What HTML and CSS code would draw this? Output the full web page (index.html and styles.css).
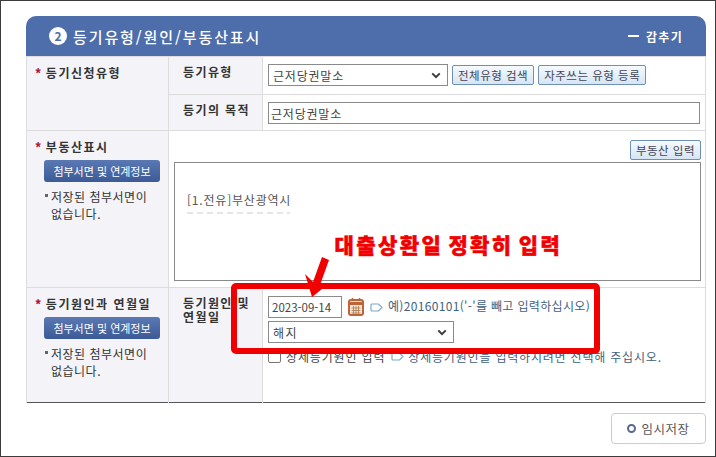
FILE: index.html
```html
<!DOCTYPE html>
<html lang="ko">
<head>
    <meta charset="UTF-8">
    <title>등기유형/원인/부동산표시</title>
    <link rel="stylesheet" href="styles.css">
</head>
<body>
    <div class="page">
        <div class="panel-head">
            <h2 class="panel-title"><span class="step">2</span>등기유형/원인/부동산표시</h2>
            <span class="fold"><i class="fold-bar"></i>감추기</span>
        </div>
        <table class="form">
            <colgroup>
                <col class="col-a">
                <col class="col-b">
                <col>
            </colgroup>
            <tr class="row-type">
                <th class="main" rowspan="2"><b class="star">*</b>등기신청유형</th>
                <th class="sub">등기유형</th>
                <td>
                    <div class="line">
                        <span class="select select-type">근저당권말소<svg class="chev" viewBox="0 0 12 8"><path d="M1.500 1.500 6 6l4.500-4.500"/></svg></span>
                        <button class="btn">전체유형 검색</button>
                        <button class="btn">자주쓰는 유형 등록</button>
                    </div>
                </td>
            </tr>
            <tr class="row-goal">
                <th class="sub">등기의 목적</th>
                <td><div class="input input-full">근저당권말소</div></td>
            </tr>
            <tr class="row-estate">
                <th class="main">
                    <b class="star">*</b>부동산표시
                    <button class="btn-blue">첨부서면 및 연계정보</button>
                    <p class="note">저장된 첨부서면이<br>없습니다.</p>
                </th>
                <td colspan="2" class="estate">
                    <div class="estate-top"><button class="btn">부동산 입력</button></div>
                    <div class="textarea">
                        <div>[1.전유]부산광역시</div>
                        <i class="smudge"></i>
                    </div>
                </td>
            </tr>
            <tr class="row-cause">
                <th class="main">
                    <b class="star">*</b>등기원인과 연월일
                    <button class="btn-blue">첨부서면 및 연계정보</button>
                    <p class="note">저장된 첨부서면이<br>없습니다.</p>
                </th>
                <th class="sub">등기원인 및<br>연월일</th>
                <td class="cause">
                    <div class="line">
                        <div class="input input-date">2023-09-14</div>
                        <svg class="cal" viewBox="0 0 16 18">
                            <rect x="1" y="2" width="14" height="15" rx="2" fill="#f7e6d4" stroke="#bd6438" stroke-width="2"/>
                            <path d="M1 5.500h14" stroke="#bd6438" stroke-width="3"/>
                            <path d="M3.500 10h9M3.500 12.500h9M3.500 15h9M5.500 8v8M8 8v8M10.500 8v8" stroke="#a9764f" stroke-width="0.800"/>
                            <path d="M4.500 0v3M11.500 0v3" stroke="#bd6438" stroke-width="1.500"/>
                        </svg>
                        <svg class="tag" viewBox="0 0 13 9"><path d="M2 1h6.500L12 4.500 8.500 8H2a1 1 0 0 1-1-1V2a1 1 0 0 1 1-1z"/></svg>
                        <span class="hint hint-date">예)20160101('-'를 빼고 입력하십시오)</span>
                    </div>
                    <span class="select select-cause">해지<svg class="chev" viewBox="0 0 12 8"><path d="M1.500 1.500 6 6l4.500-4.500"/></svg></span>
                    <div class="line line-check">
                        <i class="check"></i>
                        <span class="check-label">상세등기원인 입력</span>
                        <svg class="tag" viewBox="0 0 13 9"><path d="M2 1h6.500L12 4.500 8.500 8H2a1 1 0 0 1-1-1V2a1 1 0 0 1 1-1z"/></svg>
                        <span class="hint hint-check">상세등기원인을 입력하시려면 선택해 주십시오.</span>
                    </div>
                </td>
            </tr>
        </table>
        <div class="actions">
            <button class="btn-save"><i class="dot"></i>임시저장</button>
        </div>

        <!-- red annotation drawn over the form -->
        <div class="mark-box"></div>
        <div class="mark-text">대출상환일 정확히 입력</div>
        <svg class="mark-arrow" viewBox="0 0 35 45"><path d="M22 2 29 5 20 30 27 30 12 42 5 19 13 27z"/></svg>
    </div>
</body>
</html>
```

FILE: styles.css
```css
* {
    margin: 0;
    padding: 0;
    box-sizing: border-box;
}

html, body {
    width: 716px;
    height: 457px;
    overflow: hidden;
    background: #fff;
}

body {
    font-family: "Noto Sans CJK KR", "Noto Sans", sans-serif;
    font-size: 12px;
    color: #333;
}

.page {
    position: relative;
    width: 716px;
    height: 457px;
    padding: 15px 9px 0 25px;
    border: 1.5px solid #3c3c3c;
}

.panel-head {
    display: flex;
    justify-content: space-between;
    align-items: center;
    height: 40px;
    padding: 0 23px 0 23px;
    background: #4e6dab;
    border-radius: 10px 10px 0 0;
    color: #fff;
}

.panel-title {
    display: flex;
    align-items: center;
    gap: 6px;
    font-size: 15px;
    font-weight: 500;
    letter-spacing: 1.900px;
}

.step {
    width: 18px;
    height: 18px;
    border-radius: 50%;
    background: #fff;
    color: #4e6dab;
    font-size: 12px;
    font-weight: 700;
    line-height: 18px;
    text-align: center;
    letter-spacing: 0;
}

.fold {
    display: flex;
    align-items: center;
    gap: 7px;
    font-weight: 700;
    font-size: 12px;
    letter-spacing: 1.300px;
}

.fold-bar {
    width: 11px;
    height: 2px;
    background: #fff;
}

.form {
    width: 680px;
    table-layout: fixed;
    border-collapse: collapse;
    border-bottom: 1px solid #555;
}

.col-a { width: 142px; }
.col-b { width: 94px; }

.form th, .form td {
    border: 1px solid #dcdcdc;
    text-align: left;
    vertical-align: top;
    font-weight: 400;
}

.form tr:last-child th, .form tr:last-child td {
    border-bottom: 0;
}

.form th {
    background: #f4f4f8;
}

.form .main {
    padding: 7px 0 0 8px;
    font-weight: 700;
    color: #333;
    letter-spacing: 1.500px;
}

.form .sub {
    padding: 8px 0 0 14px;
    font-weight: 700;
    line-height: 14px;
    letter-spacing: 1.400px;
}

.form td {
    padding: 7px 5px 0 5px;
}

.row-type { height: 38px; }
.row-goal { height: 36px; }
.row-estate { height: 157px; }
.row-cause { height: 115px; }

.star {
    color: #b5123c;
    margin-right: 3px;
}

.line {
    display: flex;
    align-items: center;
    gap: 4px;
}

.select, .input {
    display: flex;
    align-items: center;
    height: 22px;
    border: 1px solid #8a8a8a;
    background: #fff;
    color: #444;
    letter-spacing: 0.800px;
}

.select {
    justify-content: space-between;
    padding: 0 6px 0 4px;
}

.input {
    padding: 0 2px;
}

.select-type { width: 180px; }
.select-cause { width: 186px; margin-top: 3px; letter-spacing: 1.500px; }
.input-full { width: 432px; }
.input-date { width: 74px; padding: 0 3px; font-size: 11.500px; letter-spacing: 0; }

.chev {
    width: 10px;
    height: 7px;
    fill: none;
    stroke: #3a3a3a;
    stroke-width: 2.400;
}

.btn {
    height: 20px;
    padding: 0 5px;
    border: 1px solid #6f90b5;
    border-radius: 2px;
    background: linear-gradient(#f6fafe, #d6e5f4);
    color: #445;
    font: inherit;
    font-size: 11.500px;
    line-height: 18px;
    letter-spacing: 0.500px;
}

.btn-blue {
    display: block;
    width: 116px;
    height: 22px;
    margin: 5px 0 0 9px;
    border: 0;
    border-radius: 3px;
    background: linear-gradient(#5a78b4, #3c5a96);
    color: #fff;
    font: inherit;
    font-weight: 400;
    font-size: 11px;
    letter-spacing: 0;
}

.note {
    position: relative;
    margin: 6px 0 0 16px;
    font-weight: 400;
    line-height: 17px;
    letter-spacing: 0.500px;
}

.note::before {
    content: "";
    position: absolute;
    left: -6px;
    top: 6px;
    width: 3px;
    height: 3px;
    background: #666;
}

.estate-top {
    display: flex;
    justify-content: flex-end;
    padding: 2px 0;
}

.form .estate {
    padding: 7px 4px 0 5px;
}

.textarea {
    height: 119px;
    padding: 28px 12px 0;
    border: 1px solid #8a8a8a;
    color: #555;
    font-size: 12px;
    letter-spacing: 0.800px;
}

.smudge {
    display: block;
    width: 103px;
    height: 2px;
    margin-top: 4px;
    background: repeating-linear-gradient(90deg, #e6e6e6 0 6px, #fff 6px 10px);
}

.form .cause {
    padding-top: 8px;
}

.cal {
    width: 16px;
    height: 18px;
    margin-left: 2px;
}

.tag {
    width: 13px;
    height: 9px;
    margin-left: 2px;
    fill: none;
    stroke: #7fa8cc;
    stroke-width: 1.200;
}

.hint {
    color: #3e5f80;
}

.hint-date {
    position: relative;
    top: -2px;
    margin-left: 1px;
    letter-spacing: 0.330px;
}

.hint-check {
    letter-spacing: 0.800px;
}

.line-check {
    margin-top: 5px;
    color: #444;
}

.check-label {
    letter-spacing: 0.850px;
}

.check {
    width: 13px;
    height: 13px;
    margin-right: 1px;
    border: 1px solid #777;
    border-radius: 2px;
    background: #fff;
}

.actions {
    display: flex;
    justify-content: flex-end;
    margin-top: 10px;
}

.btn-save {
    display: flex;
    align-items: center;
    justify-content: center;
    gap: 5px;
    width: 95px;
    height: 31px;
    border: 1px solid #ccc;
    border-radius: 4px;
    background: #fff;
    color: #555;
    font: inherit;
    font-size: 12.500px;
    letter-spacing: 0.500px;
}

.dot {
    width: 9px;
    height: 9px;
    border: 2.500px solid #56698f;
    border-radius: 50%;
}

.mark-box {
    position: absolute;
    left: 229.500px;
    top: 281.500px;
    width: 369px;
    height: 71px;
    border: 6.500px solid #f00000;
    border-radius: 5px;
}

.mark-text {
    position: absolute;
    left: 333.500px;
    top: 230px;
    color: #f00000;
    font-size: 21px;
    font-weight: 900;
    line-height: 26px;
    letter-spacing: 2.400px;
    word-spacing: -3px;
    -webkit-text-stroke: 0.500px #f00000;
    white-space: nowrap;
}

.mark-arrow {
    position: absolute;
    left: 298.500px;
    top: 253.500px;
    width: 35px;
    height: 45px;
    fill: #f00000;
}
```
